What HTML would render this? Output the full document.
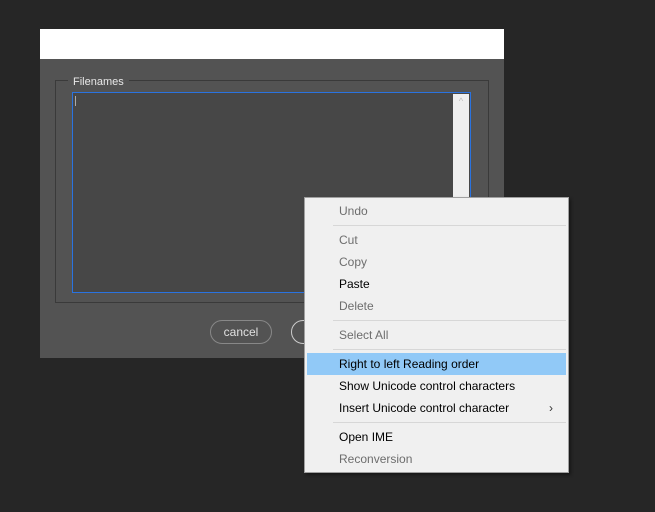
<!DOCTYPE html>
<html><head><style>
body{margin:0;width:655px;height:512px;background:#262626;position:relative;overflow:hidden;font-family:"Liberation Sans",sans-serif}
div{position:absolute;box-sizing:border-box}
.it{left:34px;font-size:12px;height:22px;line-height:22px;color:#000}
.d{color:#6d6d6d}
.sep{left:28px;width:233px;height:1px;background:#d7d7d7}
</style></head><body>
<div style="left:40px;top:29px;width:464px;height:30px;background:#fff"></div>
<div style="left:40px;top:59px;width:464px;height:299px;background:#535353"></div>
<div style="left:55px;top:80px;width:434px;height:223px;border:1px solid #3a3a3a"></div>
<div style="left:68px;top:75px;padding:0 5px;background:#535353;color:#e8e8e8;font-size:11px;line-height:14px">Filenames</div>
<div style="left:72px;top:92px;width:399px;height:201px;border:1px solid #2a73e0;background:#474747"></div>
<div style="left:75px;top:96px;width:1px;height:10px;background:#aaa"></div>
<div style="left:453px;top:94px;width:16px;height:110px;background:#efefef;color:#bbb;font-size:9px;text-align:center;line-height:14px">^</div>
<div style="left:210px;top:320px;width:62px;height:24px;border:1px solid #888;border-radius:12px;color:#e0e0e0;font-size:12px;text-align:center;line-height:22px">cancel</div>
<div style="left:291px;top:320px;width:62px;height:24px;border:1px solid #ccc;border-radius:12px"></div>
<div style="left:304px;top:197px;width:265px;height:276px;background:#f0f0f0;border:1px solid #a0a0a0;box-shadow:2px 2px 3px rgba(0,0,0,.4)">
<div class="it d" style="top:2px">Undo</div>
<div class="sep" style="top:27px"></div>
<div class="it d" style="top:31px">Cut</div>
<div class="it d" style="top:53px">Copy</div>
<div class="it" style="top:75px">Paste</div>
<div class="it d" style="top:97px">Delete</div>
<div class="sep" style="top:122px"></div>
<div class="it d" style="top:126px">Select All</div>
<div class="sep" style="top:151px"></div>
<div style="left:2px;top:155px;width:259px;height:22px;background:#91c9f7"></div>
<div class="it" style="top:155px">Right to left Reading order</div>
<div class="it" style="top:177px">Show Unicode control characters</div>
<div class="it" style="top:199px">Insert Unicode control character</div>
<div style="left:244px;top:199px;font-size:12px;line-height:22px;color:#333">&#8250;</div>
<div class="sep" style="top:224px"></div>
<div class="it" style="top:228px">Open IME</div>
<div class="it d" style="top:250px">Reconversion</div>
</div>
</body></html>
